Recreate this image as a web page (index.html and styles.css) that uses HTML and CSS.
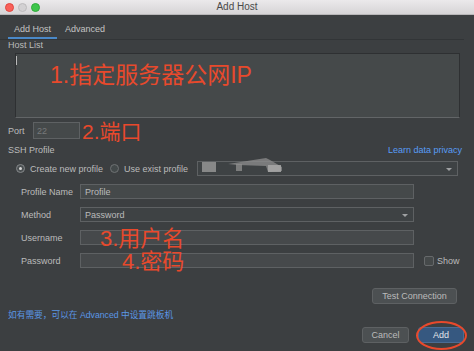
FILE: index.html
```html
<!DOCTYPE html>
<html>
<head>
<meta charset="utf-8">
<title>Add Host</title>
<link rel="stylesheet" href="styles.css">
</head>
<body>
<div class="window">
  <header class="titlebar">
    <div class="lights">
      <span class="light red"></span>
      <span class="light gray"></span>
      <span class="light green"></span>
    </div>
    <div class="title">Add Host</div>
    <div></div>
  </header>

  <nav class="tabs">
    <span class="tab active">Add Host</span>
    <span class="tab">Advanced</span>
  </nav>

  <main class="content">
    <div class="section-label">Host List</div>
    <div class="hostlist"><span class="caret"></span></div>

    <div class="port-row">
      <span class="label">Port</span>
      <div class="field port-field">22</div>
    </div>

    <div class="ssh-row">
      <span class="label">SSH Profile</span>
      <span class="link">Learn data privacy</span>
    </div>

    <div class="radio-row">
      <span class="radio checked"></span>
      <span class="radio-text">Create new profile</span>
      <span class="radio second"></span>
      <span class="radio-text">Use exist profile</span>
      <div class="dropdown profile-select">
        <svg class="redact" width="90" height="22" viewBox="0 0 90 22">
          <rect x="4" y="5" width="14" height="10" fill="#9a9a9a" opacity="0.8"/>
          <rect x="38" y="7" width="6" height="7" fill="#8c8c8c" opacity="0.8"/>
          <polygon points="30,7 68,1 72,3 84,10 84,14 70,15 68,9 40,8" fill="#8f8f8f" opacity="0.75"/>
          <rect x="70" y="8" width="13" height="7" fill="#a8a8a8" opacity="0.85"/>
        </svg>
        <span class="arrow"></span>
      </div>
    </div>

    <div class="form">
      <span class="flabel">Profile Name</span>
      <div class="field wide">Profile</div>
      <span></span>

      <span class="flabel">Method</span>
      <div class="dropdown wide">Password<span class="arrow"></span></div>
      <span></span>

      <span class="flabel">Username</span>
      <div class="field wide"></div>
      <span></span>

      <span class="flabel">Password</span>
      <div class="field wide"></div>
      <label class="show"><span class="checkbox"></span>Show</label>
    </div>

    <div class="test-row">
      <button class="btn test">Test Connection</button>
    </div>

    <div class="jump-link">如有需要，可以在 Advanced 中设置跳板机</div>

    <div class="actions">
      <button class="btn cancel">Cancel</button>
      <button class="btn primary">Add</button>
    </div>
  </main>

  <div class="note n1">1.指定服务器公网IP</div>
  <div class="note n2">2.端口</div>
  <div class="note n3">3.用户名</div>
  <div class="note n4">4.密码</div>
  <div class="circle"></div>
</div>
</body>
</html>
```

FILE: styles.css
```css
* { box-sizing: border-box; }

html, body {
  margin: 0;
  padding: 0;
  background: #3c3f41;
}

body {
  width: 474px;
  height: 351px;
  overflow: hidden;
  font-family: "Liberation Sans", "Noto Sans CJK SC", sans-serif;
  font-size: 9px;
  color: #bbbbbb;
}

.window {
  position: relative;
  width: 474px;
  height: 351px;
  background: #3c3f41;
}

/* title bar */
.titlebar {
  height: 15px;
  display: grid;
  grid-template-columns: 1fr auto 1fr;
  align-items: center;
  background: linear-gradient(#ebe9eb, #d6d4d6);
  border-bottom: 1px solid #b9b7b9;
}
.lights {
  display: flex;
  gap: 4px;
  padding-left: 5px;
}
.light {
  width: 9px;
  height: 9px;
  border-radius: 50%;
}
.light.red { background: #f9615a; border: 0.5px solid #e1463f; }
.light.gray { background: #d3d1d3; border: 0.5px solid #bdbbbd; }
.light.green { background: #3dc54a; border: 0.5px solid #2eab3a; }
.title {
  font-size: 10px;
  color: #4a4a4a;
  line-height: 14px;
}

/* tabs */
.tabs {
  height: 25px;
  display: flex;
  padding-left: 8px;
  margin-right: 10px;
  border-bottom: 1px solid #323537;
}
.tab {
  display: flex;
  align-items: center;
  justify-content: center;
  padding-top: 3px;
  height: 24px;
  color: #c4c4c4;
}
.tab.active {
  width: 49px;
  box-shadow: inset 0 -2px 0 #4a88c7;
}
.tab:not(.active) {
  margin-left: 8px;
}

/* content */
.content {
  padding: 0 8px;
}
.section-label {
  line-height: 10px;
  height: 10px;
}
.hostlist {
  position: relative;
  margin: 3px 0 0 7px;
  width: 445px;
  height: 65px;
  background: #45494a;
  border: 1px solid;
  border-color: #2e3032 #2e3032 #626567 #2e3032;
}
.caret {
  position: absolute;
  left: 0;
  top: 2px;
  width: 1px;
  height: 9px;
  background: #bbbbbb;
}

.port-row {
  margin-top: 4px;
  height: 17px;
  display: flex;
  align-items: center;
}
.port-row .label {
  width: 25px;
}
.field {
  height: 17px;
  background: #45494a;
  border: 1px solid #5e6163;
  padding-left: 3px;
  display: flex;
  align-items: center;
  color: #bbbbbb;
}
.port-field {
  width: 47px;
  color: #77797b;
}

.ssh-row {
  margin-top: 5px;
  height: 12px;
  display: flex;
  align-items: center;
  justify-content: space-between;
  margin-right: 4px;
}
.link {
  color: #589df6;
}

.radio-row {
  margin-top: 5px;
  height: 15px;
  display: flex;
  align-items: center;
  padding-left: 8px;
  margin-right: 8px;
}
.radio {
  width: 9px;
  height: 9px;
  border-radius: 50%;
  border: 1px solid #6f7274;
  background: #43494a;
  display: flex;
  align-items: center;
  justify-content: center;
  flex: none;
}
.radio.checked::after {
  content: "";
  width: 3px;
  height: 3px;
  border-radius: 50%;
  background: #d8d8d8;
}
.radio.checked {
  border-color: #85888a;
  background: #4b5052;
}
.radio-text {
  margin-left: 5px;
  white-space: nowrap;
}
.radio.second {
  margin-left: 7px;
}
.dropdown {
  position: relative;
  height: 15px;
  border: 1px solid #5e6163;
  background: #3e4244;
  display: flex;
  align-items: center;
  padding-left: 4px;
  color: #bbbbbb;
}
.profile-select {
  flex: 1;
  margin-left: 9px;
}
.redact {
  position: absolute;
  left: 0;
  top: -5px;
  filter: blur(0.6px);
}
.arrow {
  position: absolute;
  right: 5px;
  top: 50%;
  margin-top: -1px;
  width: 0;
  height: 0;
  border-left: 3px solid transparent;
  border-right: 3px solid transparent;
  border-top: 3px solid #9fa1a3;
}

.form {
  margin-top: 8px;
  padding-left: 13px;
  display: grid;
  grid-template-columns: 59px 334px auto;
  grid-auto-rows: 15px;
  row-gap: 8px;
  align-items: center;
}
.flabel {
  white-space: nowrap;
}
.wide {
  height: 15px;
}
.form .field {
  background: #46494b;
  padding-left: 4px;
}
.form .field:first-of-type {
  background: #45494a;
}
.show {
  display: flex;
  align-items: center;
  margin-left: 10px;
  color: #bbbbbb;
}
.checkbox {
  width: 10px;
  height: 10px;
  border: 1px solid #66696b;
  background: #45494a;
  border-radius: 2px;
  margin-right: 3px;
}

.test-row {
  margin-top: 20px;
  display: flex;
  justify-content: flex-end;
  margin-right: 9px;
}
.btn {
  font-family: inherit;
  font-size: 9px;
  color: #bbbbbb;
  background: #4c5052;
  border: 1px solid #5e6163;
  border-radius: 3px;
  height: 17px;
  padding: 0;
}
.test { width: 85px; height: 16px; }

.jump-link {
  margin-top: 6px;
  line-height: 10px;
  color: #5b97e6;
  font-size: 8.7px;
}

.actions {
  margin-top: 7px;
  display: flex;
  justify-content: flex-end;
  gap: 9px;
  margin-right: 2px;
}
.cancel { width: 47px; height: 16px; }
.primary {
  width: 46px;
  height: 16px;
  background: #365880;
  border-color: #4a6c93;
  color: #e2e6ea;
}

/* red annotations over the screenshot */
.note {
  position: absolute;
  font-family: "Liberation Sans", "Noto Sans CJK SC", sans-serif;
  font-size: 22px;
  line-height: 22px;
  color: #e8492c;
  white-space: nowrap;
}
.n1 { left: 50px; top: 64px; font-size: 23px; }
.n2 { left: 82px; top: 121px; font-size: 21px; }
.n3 { left: 100px; top: 228px; line-height: 21px; }
.n4 { left: 122px; top: 251px; line-height: 21px; }
.circle {
  position: absolute;
  left: 416px;
  top: 321px;
  width: 51px;
  height: 29px;
  border: 2px solid #e8492c;
  border-radius: 50%;
}
```
